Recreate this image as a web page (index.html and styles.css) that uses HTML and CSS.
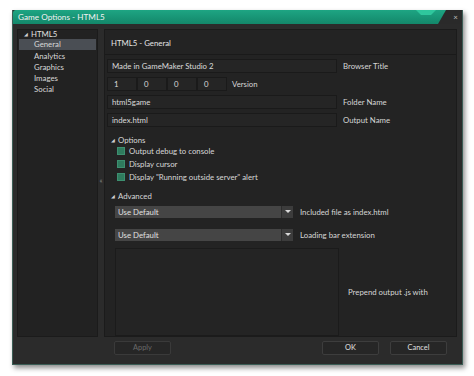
FILE: index.html
```html
<!DOCTYPE html>
<html>
<head>
<meta charset="utf-8">
<link rel="stylesheet" href="styles.css">
</head>
<body>
<div class="window">
  <div class="titlebar">
    <span class="title">Game Options - HTML5</span>
    <div class="notch"></div>
    <div class="closebox"><span class="close">×</span></div>
  </div>
  <div class="main">
    <div class="tree">
      <div class="tree-root"><span class="tri">◢</span>HTML5</div>
      <div class="tree-item selected">General</div>
      <div class="tree-item">Analytics</div>
      <div class="tree-item">Graphics</div>
      <div class="tree-item">Images</div>
      <div class="tree-item">Social</div>
    </div>
    <div class="splitter">«</div>
    <div class="content">
      <div class="header">HTML5 - General</div>
      <div class="rows">
        <div class="row">
          <div class="field wide">Made in GameMaker Studio 2</div>
          <div class="label">Browser Title</div>
        </div>
        <div class="row">
          <div class="nums">
            <div class="field num">1</div>
            <div class="field num">0</div>
            <div class="field num">0</div>
            <div class="field num">0</div>
          </div>
          <div class="label vlabel">Version</div>
        </div>
        <div class="row">
          <div class="field wide">html5game</div>
          <div class="label">Folder Name</div>
        </div>
        <div class="row">
          <div class="field wide">index.html</div>
          <div class="label">Output Name</div>
        </div>
      </div>
      <div class="group">
        <div class="group-title"><span class="tri">◢</span>Options</div>
        <div class="check"><span class="box"></span>Output debug to console</div>
        <div class="check"><span class="box"></span>Display cursor</div>
        <div class="check"><span class="box"></span>Display "Running outside server" alert</div>
      </div>
      <div class="group adv">
        <div class="group-title"><span class="tri">◢</span>Advanced</div>
        <div class="drow">
          <div class="dropdown"><span class="dtext">Use Default</span><span class="darrow"><svg width="6" height="4" viewBox="0 0 6 4"><path d="M0 0H6L3 3Z" fill="#d8d8d8"/></svg></span></div>
          <div class="dlabel">Included file as index.html</div>
        </div>
        <div class="drow">
          <div class="dropdown"><span class="dtext">Use Default</span><span class="darrow"><svg width="6" height="4" viewBox="0 0 6 4"><path d="M0 0H6L3 3Z" fill="#d8d8d8"/></svg></span></div>
          <div class="dlabel">Loading bar extension</div>
        </div>
        <div class="trow">
          <div class="textarea"></div>
          <div class="tlabel">Prepend output .js with</div>
        </div>
      </div>
    </div>
  </div>
  <div class="footer">
    <div class="btn apply">Apply</div>
    <div class="spacer"></div>
    <div class="btn">OK</div>
    <div class="btn">Cancel</div>
  </div>
</div>
</body>
</html>
```

FILE: styles.css
```css
* { box-sizing: border-box; }
html, body { margin: 0; padding: 0; background: #ffffff; }
body {
  font-family: "Lato", "Open Sans", sans-serif;
  font-size: 7.8px;
  color: #d6d6d6;
  width: 474px;
  height: 376px;
  overflow: hidden;
}
.window {
  margin: 10px 0 0 12px;
  width: 451px;
  height: 355px;
  background: #2b2b2b;
  border: 1px solid #3b5d55;
  border-top: none;
  box-shadow: 2px 3px 5px rgba(0,0,0,0.45);
  display: flex;
  flex-direction: column;
}
.titlebar {
  height: 14px;
  background: linear-gradient(#1ea583, #13876a);
  display: flex;
  align-items: center;
  padding-left: 5px;
  position: relative;
  border-radius: 3px 3px 0 0;
}
.title { color: #f2f2f2; font-size: 8.2px; flex: 1; }
.notch {
  position: absolute;
  right: 26px;
  top: 0;
  width: 20px;
  height: 0;
  border-left: 5px solid transparent;
  border-right: 5px solid transparent;
  border-top: 5px solid #2fc79d;
}
.closebox {
  width: 24px;
  height: 14px;
  background: #2a2a2a;
  clip-path: polygon(8px 0, 100% 0, 100% 100%, 0 100%);
  display: flex;
  align-items: center;
  justify-content: flex-end;
  padding-right: 4px;
}
.close { color: #bdbdbd; font-size: 8px; line-height: 1; }
.main {
  display: flex;
  padding: 5px 5px 0 4px;
  height: 313px;
}
.tree {
  width: 81px;
  background: #222222;
  border: 1px solid #1b1b1b;
}
.tree-root { height: 9px; line-height: 9px; padding-left: 6px; color: #e0e0e0; }
.tri { font-size: 5px; margin-right: 3px; color: #cfcfcf; vertical-align: 1px; }
.tree-item { height: 11px; line-height: 12px; padding-left: 16px; color: #d8d8d8; }
.tree-item.selected { background: #4a4e54; margin: 0 1px 0 1px; padding-left: 15px; line-height: 11px; }
.splitter {
  width: 6px;
  display: flex;
  align-items: center;
  justify-content: center;
  color: #8a8a8a;
  font-size: 7px;
  margin-top: -6px;
}
.content {
  flex: 1;
  background: #232323;
  border: 1px solid #1b1b1b;
  display: flex;
  flex-direction: column;
}
.header {
  height: 27px;
  padding-left: 6px;
  padding-top: 8px;
  line-height: 10px;
  color: #e4e4e4;
  border-bottom: 1px solid #1a1a1a;
}
.rows { padding: 2px 0 0 2px; }
.row { display: flex; align-items: center; height: 18px; }
.field {
  height: 14px;
  line-height: 13px;
  border: 1px solid #1a1a1a;
  background: #252525;
  padding-left: 4px;
  color: #dadada;
}
.wide { width: 230px; }
.nums { display: flex; }
.num { width: 30px; padding-left: 6px; }
.label { margin-left: 6px; color: #d6d6d6; }
.vlabel { margin-left: 5px; }
.group { padding-left: 6px; margin-top: 7px; }
.group-title { height: 8px; line-height: 8px; color: #d8d8d8; }
.check { height: 13px; display: flex; align-items: center; padding-left: 6px; color: #d8d8d8; }
.box {
  width: 8px; height: 8px;
  background: #2f7b5e;
  border: 1px solid #3d8f70;
  margin-right: 4px;
}
.adv { margin-top: 9px; }
.drow { display: flex; align-items: center; height: 23px; padding-left: 4px; }
.dropdown {
  width: 178px;
  height: 12px;
  background: #454545;
  display: flex;
  align-items: center;
}
.dtext { flex: 1; padding-left: 3px; color: #e0e0e0; }
.darrow {
  width: 12px; height: 12px;
  background: #3c3c3c;
  border-left: 1px solid #2c2c2c;
  display: flex; align-items: center; justify-content: center;
}
.dlabel { margin-left: 7px; }
.trow { display: flex; align-items: center; padding-left: 4px; margin-top: 2px; }
.textarea {
  width: 224px;
  height: 88px;
  background: #242424;
  border: 1px solid #1b1b1b;
}
.tlabel { margin-left: 9px; }
.footer {
  display: flex;
  align-items: flex-start;
  height: 28px;
  padding: 4px 15px 0 101px;
}
.spacer { flex: 1; }
.btn {
  width: 57px;
  height: 14px;
  border: 1px solid #3d3d3d;
  background: #262626;
  border-radius: 2px;
  text-align: center;
  line-height: 12px;
  color: #e0e0e0;
  font-size: 7.4px;
}
.btn + .btn { margin-left: 11px; }
.apply { color: #6a6a6a; border-color: #3a3a3a; }
```
